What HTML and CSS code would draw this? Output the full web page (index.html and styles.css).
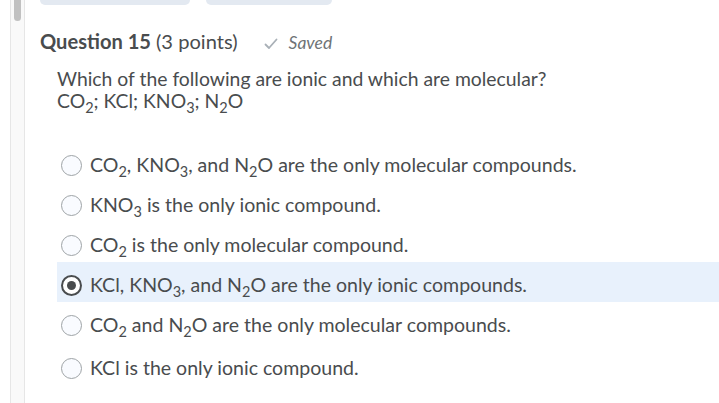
FILE: index.html
```html
<!DOCTYPE html>
<html>
<head>
<meta charset="utf-8">
<link rel="stylesheet" href="styles.css">
</head>
<body>
<div class="page">
  <div class="scrollbar"><div class="thumb"></div></div>
  <div class="content">
    <div class="tabs">
      <div class="tab tab-a"></div>
      <div class="tab tab-b"></div>
    </div>
    <div class="qhead">
      <span class="qtitle">Question 15</span>
      <span class="qpoints">(3 points)</span>
      <span class="saved">
        <svg class="check" width="14" height="12" viewBox="0 0 14 12"><path d="M1.5 6.5 L5 10 L12.5 1.5" fill="none" stroke="#a9b0b7" stroke-width="1.8" stroke-linecap="round" stroke-linejoin="round"/></svg>
        <em>Saved</em>
      </span>
    </div>
    <div class="qtext">
      <p>Which of the following are ionic and which are molecular?</p>
      <p>CO<sub>2</sub>; KCl; KNO<sub>3</sub>; N<sub>2</sub>O</p>
    </div>
    <div class="options">
      <div class="opt"><span class="radio"></span><span class="label">CO<sub>2</sub>, KNO<sub>3</sub>, and N<sub>2</sub>O are the only molecular compounds.</span></div>
      <div class="opt"><span class="radio"></span><span class="label">KNO<sub>3</sub> is the only ionic compound.</span></div>
      <div class="opt"><span class="radio"></span><span class="label">CO<sub>2</sub> is the only molecular compound.</span></div>
      <div class="opt selected"><span class="radio checked"></span><span class="label">KCl, KNO<sub>3</sub>, and N<sub>2</sub>O are the only ionic compounds.</span></div>
      <div class="opt"><span class="radio"></span><span class="label">CO<sub>2</sub> and N<sub>2</sub>O are the only molecular compounds.</span></div>
      <div class="opt"><span class="radio"></span><span class="label">KCl is the only ionic compound.</span></div>
    </div>
  </div>
</div>
</body>
</html>
```
FILE: styles.css
```css
html, body {
  margin: 0;
  padding: 0;
  background: #ffffff;
}
body {
  font-family: Lato, "Noto Sans", sans-serif;
  color: #494c4e;
  width: 719px;
  height: 403px;
  overflow: hidden;
}
.page {
  display: flex;
  height: 403px;
}
.scrollbar {
  margin-left: 10px;
  width: 13px;
  height: 403px;
  background: #f9f9f9;
  border-left: 1px solid #e6e6e6;
  border-right: 1px solid #e6e6e6;
}
.thumb {
  margin-left: 3px;
  width: 7px;
  height: 21px;
  background: #c1c1c1;
  border-radius: 0 0 4px 4px;
}
.content {
  flex: 1;
  padding-left: 15px;
}
.tabs {
  display: flex;
  gap: 16px;
  height: 5px;
}
.tab {
  height: 5px;
  background: #e3e9f1;
  border-radius: 0 0 6px 6px;
}
.tab-a { width: 150px; }
.tab-b { width: 126px; }
.qhead {
  margin-top: 24px;
  font-size: 20.1px;
  line-height: 24px;
  display: flex;
  align-items: baseline;
}
.qtitle {
  font-weight: 700;
}
.qpoints {
  margin-left: 5px;
}
.saved {
  margin-left: 26px;
  color: #6e7376;
  font-size: 17.5px;
  display: flex;
  align-items: baseline;
}
.check {
  margin-right: 11px;
  position: relative;
  top: 1px;
}
.qtext {
  margin-top: 13px;
  margin-left: 17px;
  font-size: 19.35px;
  line-height: 22px;
}
.qtext p {
  margin: 0;
}
sub {
  font-size: 14.5px;
  line-height: 0;
  vertical-align: -5px;
}
.options {
  margin-top: 30px;
  margin-left: 17px;
}
.opt {
  box-sizing: border-box;
  display: flex;
  align-items: center;
  height: 40px;
  padding-top: 7px;
  font-size: 19.55px;
  padding-left: 4px;
}
.opt:last-child {
  margin-top: 3px;
}
.opt.selected {
  background: #e8f1fc;
}
.radio {
  box-sizing: border-box;
  width: 21px;
  height: 21px;
  border-radius: 50%;
  border: 1px solid #9ea3a6;
  background: #f9fbff;
  margin-right: 8px;
  flex: none;
  display: flex;
  align-items: center;
  justify-content: center;
}
.radio.checked {
  border: 2px solid #494c4e;
  background: #ffffff;
}
.radio.checked::after {
  content: "";
  width: 9px;
  height: 9px;
  border-radius: 50%;
  background: #494c4e;
}
.label {
  line-height: 24px;
  position: relative;
  top: -1px;
}
```
